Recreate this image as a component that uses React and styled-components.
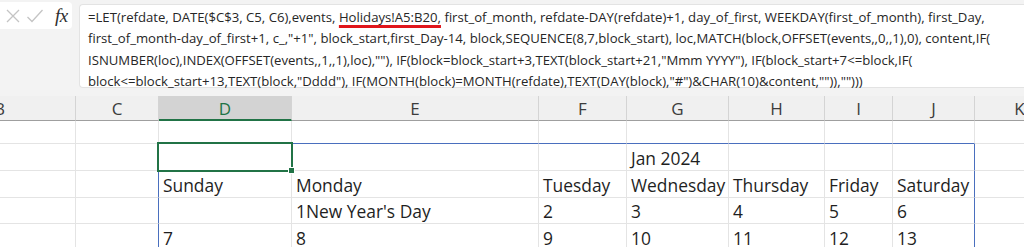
import React from 'react';
import styled, { createGlobalStyle } from 'styled-components';

const GlobalStyle = createGlobalStyle`
  html, body {
    margin: 0;
    padding: 0;
    background: #ffffff;
  }
  body {
    width: 1024px;
    height: 247px;
    overflow: hidden;
    font-family: "Open Sans", "Noto Sans", sans-serif;
  }
`;

const Page = styled.div`
  width: 1024px;
  height: 247px;
  overflow: hidden;
  background: #f3f3f3;
`;

const FormulaBar = styled.div`
  display: flex;
  align-items: flex-start;
  height: 96px;
  padding: 2px 0 0 0;
  box-sizing: border-box;
`;

const IconBox = styled.div`
  width: 72px;
  height: 27px;
  background: #ffffff;
  border-radius: 0 4px 4px 0;
  display: flex;
  align-items: center;
  gap: 4px;
  padding-left: 4px;
  box-sizing: border-box;
`;

const IconButton = styled.span`
  width: 18px;
  height: 18px;
  display: flex;
  align-items: center;
  justify-content: center;
  color: ${p => p.$muted ? '#c4c4c4' : '#3b3b3b'};
`;

const Fx = styled.span`
  font-family: "Liberation Serif", "DejaVu Serif", serif;
  font-style: italic;
  font-size: 19px;
  color: #2e2e2e;
  margin-left: 7px;
  letter-spacing: -0.5px;
`;

const FormulaBox = styled.div`
  margin: 2px 0 0 7px;
  flex: 1;
  height: 84px;
  background: #ffffff;
  border: 1px solid #e3e3e3;
  border-right: none;
  border-radius: 4px 0 0 4px;
  padding: 2px 0 0 8px;
  box-sizing: border-box;
  font-size: 13.15px;
  line-height: 21.3px;
  color: #262626;
`;

const FormulaLine = styled.div`
  white-space: nowrap;
`;

const RedMark = styled.span`
  text-decoration: underline;
  text-decoration-color: #e0161b;
  text-decoration-thickness: 3px;
  text-underline-offset: 3px;
`;

const Sheet = styled.div`
  margin-left: -76px;
  display: grid;
  grid-template-columns: 152px 83px 133px 247px 88px 102px 96px 68px 82px 90px;
  grid-template-rows: 25px 23px 27px 27px 26px 27px;
  background: #ffffff;
`;

const ColHead = styled.div`
  background: ${p => p.$active ? '#d3d3d3' : '#f0f0f0'};
  color: ${p => p.$active ? '#217346' : '#3c3c3c'};
  border-right: 1px solid #d4d4d4;
  border-bottom: ${p => p.$active ? '2px solid #217346' : '1px solid #9f9f9f'};
  display: flex;
  align-items: center;
  justify-content: center;
  font-size: 17px;
  box-sizing: border-box;
  padding-top: 1px;
`;

const Cell = styled.div`
  position: relative;
  box-sizing: border-box;
  border-right: 1px solid ${p => p.$blueRight ? '#4a6fbe' : '#e4e4e4'};
  border-bottom: 1px solid ${p => p.$blueBottom ? '#4a6fbe' : '#e4e4e4'};
  display: flex;
  align-items: flex-end;
  padding: 0 0 1px 4px;
  font-size: 17.4px;
  line-height: 22px;
  color: #1f1f1f;
  white-space: nowrap;
  ${p => p.$selected && `
    outline: 2px solid #217346;
    outline-offset: -1px;
    z-index: 2;
    margin: -1px 0 0 -1px;
  `}
`;

const FillHandle = styled.span`
  position: absolute;
  right: -4px;
  bottom: -4px;
  width: 5px;
  height: 5px;
  background: #217346;
  border: 1px solid #ffffff;
`;

const cols = ['B', 'C', 'D', 'E', 'F', 'G', 'H', 'I', 'J', 'K'];

const rows = [
  ['', '', '', '', '', '', '', '', '', ''],
  ['', '', '', '', '', 'Jan 2024', '', '', '', ''],
  ['', '', 'Sunday', 'Monday', 'Tuesday', 'Wednesday', 'Thursday', 'Friday', 'Saturday', ''],
  ['', '', '', "1New Year's Day", '2', '3', '4', '5', '6', ''],
  ['', '', '7', '8', '9', '10', '11', '12', '13', ''],
  ['', '', '', '', '', '', '', '', '', ''],
];

const CrossIcon = () => (
  <svg width="16" height="16" viewBox="0 0 16 16" fill="none" stroke="currentColor" strokeWidth="1.3">
    <path d="M2 2 L14 14 M14 2 L2 14" />
  </svg>
);

const CheckIcon = () => (
  <svg width="18" height="16" viewBox="0 0 18 16" fill="none" stroke="currentColor" strokeWidth="1.3">
    <path d="M1.5 9 L6 13.5 L16.5 2" />
  </svg>
);

export default function App() {
  return (
    <Page>
      <GlobalStyle />
      <FormulaBar>
        <IconBox>
          <IconButton $muted><CrossIcon /></IconButton>
          <IconButton $muted><CheckIcon /></IconButton>
          <Fx>fx</Fx>
        </IconBox>
        <FormulaBox>
          <FormulaLine>
            =LET(refdate, DATE($C$3, C5, C6),events, <RedMark>Holidays!A5:B20,</RedMark> first_of_month, refdate-DAY(refdate)+1, day_of_first, WEEKDAY(first_of_month), first_Day,
          </FormulaLine>
          <FormulaLine>
            first_of_month-day_of_first+1, c_,"+1", block_start,first_Day-14, block,SEQUENCE(8,7,block_start), loc,MATCH(block,OFFSET(events,,0,,1),0), content,IF(
          </FormulaLine>
          <FormulaLine>
            ISNUMBER(loc),INDEX(OFFSET(events,,1,,1),loc),""), IF(block=block_start+3,TEXT(block_start+21,"Mmm YYYY"), IF(block_start+7&lt;=block,IF(
          </FormulaLine>
          <FormulaLine>
            block&lt;=block_start+13,TEXT(block,"Dddd"), IF(MONTH(block)=MONTH(refdate),TEXT(DAY(block),"#")&amp;CHAR(10)&amp;content,"")),"")))
          </FormulaLine>
        </FormulaBox>
      </FormulaBar>
      <Sheet>
        {cols.map(c => (
          <ColHead key={c} $active={c === 'D'}>{c}</ColHead>
        ))}
        {rows.map((row, r) =>
          row.map((val, c) => {
            const inCal = c >= 2 && c <= 8;
            const blueBottom = r === 0 && inCal;
            const blueRight = r >= 1 && (c === 1 || c === 8);
            const selected = r === 1 && c === 2;
            return (
              <Cell
                key={`${r}-${c}`}
                $blueBottom={blueBottom}
                $blueRight={blueRight}
                $selected={selected}
              >
                {val}
                {selected && <FillHandle />}
              </Cell>
            );
          })
        )}
      </Sheet>
    </Page>
  );
}
